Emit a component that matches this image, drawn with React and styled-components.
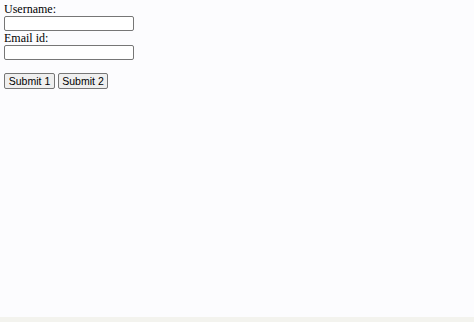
import React from "react";
import styled, { createGlobalStyle } from "styled-components";

const GlobalStyle = createGlobalStyle`
  html, body {
    margin: 0;
    padding: 0;
    height: 100%;
    background: #fcfcfe;
  }
  #root {
    height: 100%;
  }
`;

const Page = styled.div`
  height: 100%;
  display: flex;
  flex-direction: column;
`;

const Form = styled.form`
  flex: 1;
  padding: 2px 4px 0;
  font-family: "Liberation Serif", "Times New Roman", serif;
  font-size: 12px;
  color: #000;
`;

const Label = styled.label`
  display: block;
  line-height: 14px;
  height: 14px;
`;

const Input = styled.input`
  display: block;
  box-sizing: border-box;
  width: 130px;
  height: 15px;
  margin: 0;
  padding: 1px 2px;
  border: 1px solid #767676;
  border-radius: 2px;
  background: #fff;
  font-size: 10px;
`;

const Buttons = styled.div`
  display: flex;
  gap: 3px;
  margin-top: 13px;
`;

const Button = styled.button`
  box-sizing: border-box;
  height: 16px;
  width: ${(p) => p.$w}px;
  margin: 0;
  padding: 0;
  border: 1px solid #767676;
  border-radius: 2px;
  background: #efefef;
  font-family: "Liberation Sans", Arial, sans-serif;
  font-size: 10.5px;
  line-height: 14px;
  white-space: nowrap;
  color: #000;
`;

const Footer = styled.div`
  height: 5px;
  background: #f3f3ee;
`;

export default function App() {
  return (
    <Page>
      <GlobalStyle />
      <Form onSubmit={(e) => e.preventDefault()}>
        <Label>Username:</Label>
        <Input type="text" />
        <Label>Email id:</Label>
        <Input type="text" />
        <Buttons>
          <Button $w={51}>Submit 1</Button>
          <Button $w={50}>Submit 2</Button>
        </Buttons>
      </Form>
      <Footer />
    </Page>
  );
}
